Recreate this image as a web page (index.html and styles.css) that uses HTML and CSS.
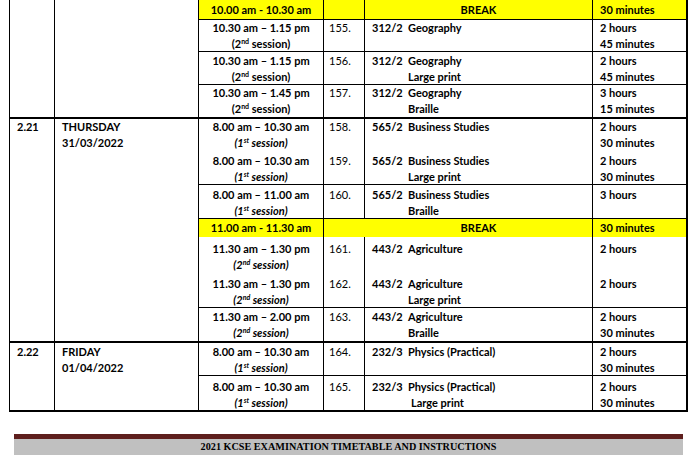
FILE: index.html
```html
<!DOCTYPE html>
<html>
<head>
<meta charset="utf-8">
<link rel="stylesheet" href="styles.css">
</head>
<body>
<table class="tt">
  <colgroup>
    <col class="c1"><col class="c2"><col class="c3"><col class="c4"><col class="c5"><col class="c6">
  </colgroup>
  <tbody>
    <tr class="brk b1">
      <td class="d end" rowspan="4"></td>
      <td class="d end" rowspan="4"></td>
      <td class="time y">10.00 am - 10.30 am</td>
      <td class="num y"></td>
      <td class="subj y center">BREAK</td>
      <td class="dur y">30 minutes</td>
    </tr>
    <tr class="p0">
      <td class="time">10.30 am – 1.15 pm<br>(2<sup>nd</sup> session)</td>
      <td class="num">155.</td>
      <td class="subj"><div class="s"><span class="code">312/2</span><span>Geography</span></div></td>
      <td class="dur">2 hours<br>45 minutes</td>
    </tr>
    <tr class="p1">
      <td class="time">10.30 am – 1.15 pm<br>(2<sup>nd</sup> session)</td>
      <td class="num">156.</td>
      <td class="subj"><div class="s"><span class="code">312/2</span><span>Geography<br>Large print</span></div></td>
      <td class="dur">2 hours<br>45 minutes</td>
    </tr>
    <tr class="p0 pb1 end">
      <td class="time">10.30 am – 1.45 pm<br>(2<sup>nd</sup> session)</td>
      <td class="num">157.</td>
      <td class="subj"><div class="s"><span class="code">312/2</span><span>Geography<br>Braille</span></div></td>
      <td class="dur">3 hours<br>15 minutes</td>
    </tr>

    <tr class="p0 nb">
      <td class="d end" rowspan="7">2.21</td>
      <td class="d end" rowspan="7">THURSDAY<br>31/03/2022</td>
      <td class="time">8.00 am – 10.30 am<br><i>(1<sup>st</sup> session)</i></td>
      <td class="num">158.</td>
      <td class="subj"><div class="s"><span class="code">565/2</span><span>Business Studies</span></div></td>
      <td class="dur">2 hours<br>30 minutes</td>
    </tr>
    <tr class="p3">
      <td class="time">8.00 am – 10.30 am<br><i>(1<sup>st</sup> session)</i></td>
      <td class="num">159.</td>
      <td class="subj"><div class="s"><span class="code">565/2</span><span>Business Studies<br>Large print</span></div></td>
      <td class="dur">2 hours<br>30 minutes</td>
    </tr>
    <tr class="p2">
      <td class="time">8.00 am – 11.00 am<br><i>(1<sup>st</sup> session)</i></td>
      <td class="num">160.</td>
      <td class="subj"><div class="s"><span class="code">565/2</span><span>Business Studies<br>Braille</span></div></td>
      <td class="dur">3 hours</td>
    </tr>
    <tr class="brk b2 nb">
      <td class="time y">11.00 am - 11.30 am</td>
      <td class="num y nr"></td>
      <td class="subj y center">BREAK</td>
      <td class="dur y">30 minutes</td>
    </tr>
    <tr class="p4 nb">
      <td class="time">11.30 am – 1.30 pm<br><i>(2<sup>nd</sup> session)</i></td>
      <td class="num">161.</td>
      <td class="subj"><div class="s"><span class="code">443/2</span><span>Agriculture</span></div></td>
      <td class="dur">2 hours</td>
    </tr>
    <tr class="p4">
      <td class="time">11.30 am – 1.30 pm<br><i>(2<sup>nd</sup> session)</i></td>
      <td class="num">162.</td>
      <td class="subj"><div class="s"><span class="code">443/2</span><span>Agriculture<br>Large print</span></div></td>
      <td class="dur">2 hours</td>
    </tr>
    <tr class="p1 pb1 end">
      <td class="time">11.30 am – 2.00 pm<br><i>(2<sup>nd</sup> session)</i></td>
      <td class="num">163.</td>
      <td class="subj"><div class="s"><span class="code">443/2</span><span>Agriculture<br>Braille</span></div></td>
      <td class="dur">2 hours<br>30 minutes</td>
    </tr>

    <tr class="p1">
      <td class="d end" rowspan="2">2.22</td>
      <td class="d end" rowspan="2">FRIDAY<br>01/04/2022</td>
      <td class="time">8.00 am – 10.30 am<br><i>(1<sup>st</sup> session)</i></td>
      <td class="num">164.</td>
      <td class="subj"><div class="s"><span class="code">232/3</span><span>Physics (Practical)</span></div></td>
      <td class="dur">2 hours<br>30 minutes</td>
    </tr>
    <tr class="p3 end">
      <td class="time">8.00 am – 10.30 am<br><i>(1<sup>st</sup> session)</i></td>
      <td class="num">165.</td>
      <td class="subj"><div class="s"><span class="code">232/3</span><span>Physics (Practical)<br><span class="ind">Large print</span></span></div></td>
      <td class="dur">2 hours<br>30 minutes</td>
    </tr>
  </tbody>
</table>

<div class="foot">2021 KCSE EXAMINATION TIMETABLE AND INSTRUCTIONS</div>
</body>
</html>
```

FILE: styles.css
```css
html, body {
  margin: 0;
  padding: 0;
  background: #ffffff;
}

body {
  font-family: Lato, "Open Sans", sans-serif;
  font-size: 11px;
  color: #000000;
  width: 698px;
  height: 455px;
  overflow: hidden;
}

.tt {
  margin-left: 9px;
  width: 679px;
  table-layout: fixed;
  border-collapse: separate;
  border-spacing: 0;
  border-left: 1px solid #000;
  border-right: 2px solid #000;
}

.c1 { width: 45px; }
.c2 { width: 144px; }
.c3 { width: 125px; }
.c4 { width: 41px; }
.c5 { width: 228px; }
.c6 { width: 93px; }

.tt td {
  border-right: 1px solid #000;
  border-bottom: 1px solid #000;
  vertical-align: top;
  padding: 1px 0 0 0;
  line-height: 15.5px;
  font-weight: 700;
  white-space: nowrap;
  overflow: hidden;
}

.tt td.dur {
  border-right: none;
  padding-left: 7px;
}

.tt td.time {
  text-align: center;
}

.tt td.num {
  font-weight: 400;
  padding-left: 5px;
}

.tt td.subj {
  padding-left: 7px;
}

.tt td.center {
  text-align: center;
  padding-left: 0;
}

.tt td.d {
  padding-left: 7px;
}

.s {
  display: flex;
}

.code {
  width: 36px;
  flex: none;
}

.ind {
  padding-left: 3px;
}

.tt td.y {
  background: #ffff00;
}

.tt td.nr {
  border-right: none;
}

/* row paddings */
.tt tr.p0 td { padding-top: 0; }
.tt tr.p1 td { padding-top: 1px; }
.tt tr.p2 td { padding-top: 2px; }
.tt tr.p3 td { padding-top: 3px; }
.tt tr.p4 td { padding-top: 4px; }
.tt tr.pb1 td { padding-bottom: 1px; }

.tt tr.brk td {
  line-height: 16px;
}
.tt tr.b1 td {
  padding-top: 2px;
  padding-bottom: 1px;
}
.tt tr.b2 td {
  padding-top: 1px;
  padding-bottom: 1px;
}

.tt tr.nb td {
  border-bottom: none;
}

.tt tr.end td {
  border-bottom: 2px solid #000;
}

.tt td.d.end {
  border-bottom: 2px solid #000;
}

sup {
  font-size: 7px;
  line-height: 0;
  vertical-align: 4px;
}

.foot {
  margin: 22px 0 0 14px;
  width: 669px;
  height: 24px;
  border-top: 5px solid #5e1f1d;
  background: #c0c0c0;
  text-align: center;
  font-family: "Liberation Serif", serif;
  font-weight: 700;
  font-size: 10.2px;
  line-height: 16px;
  color: #000;
}
```
